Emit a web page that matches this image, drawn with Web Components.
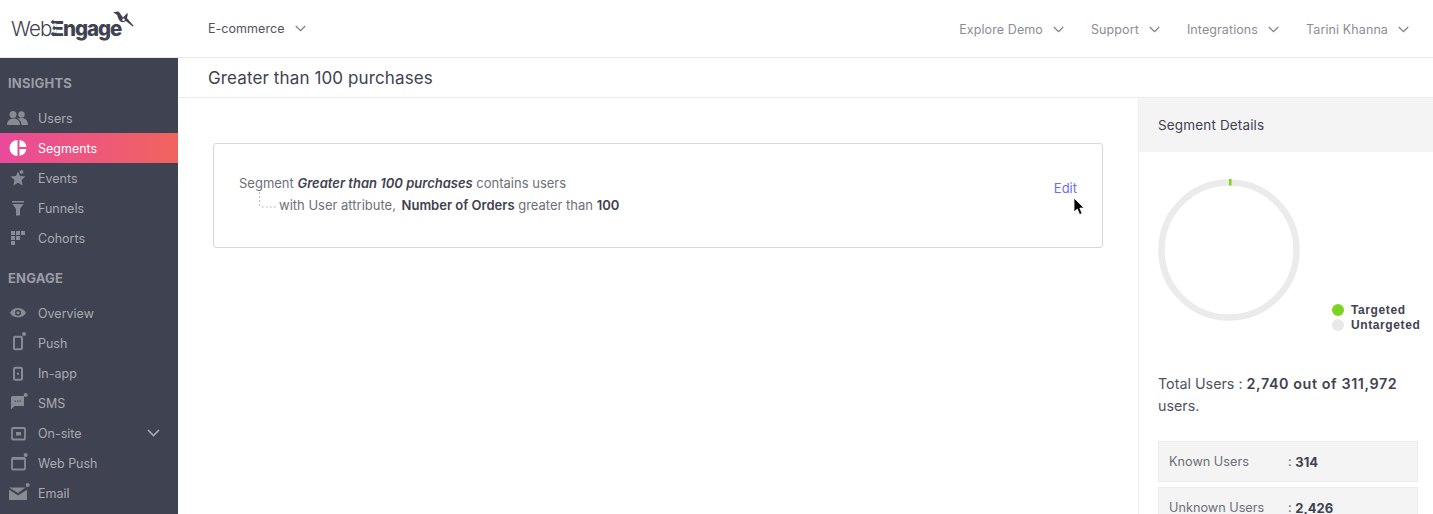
<!DOCTYPE html>
<html>
<head>
<meta charset="utf-8">
<title>Segments</title>
<style>
    html, body { margin: 0; height: 514px; overflow: hidden; background: #fff; }
    body { font-family: Inter, "Liberation Sans", sans-serif; color: #3f4250; }
</style>
</head>
<body>
<app-shell>
    <top-bar slot="top"></top-bar>
    <side-bar slot="side">
        <nav-group titulo="INSIGHTS">
            <nav-item icono="users">Users</nav-item>
            <nav-item icono="segments" activo>Segments</nav-item>
            <nav-item icono="events">Events</nav-item>
            <nav-item icono="funnels">Funnels</nav-item>
            <nav-item icono="cohorts">Cohorts</nav-item>
        </nav-group>
        <nav-group titulo="ENGAGE">
            <nav-item icono="overview">Overview</nav-item>
            <nav-item icono="push">Push</nav-item>
            <nav-item icono="inapp">In-app</nav-item>
            <nav-item icono="sms">SMS</nav-item>
            <nav-item icono="onsite" flecha>On-site</nav-item>
            <nav-item icono="webpush">Web Push</nav-item>
            <nav-item icono="email">Email</nav-item>
        </nav-group>
    </side-bar>
    <segment-card slot="main"></segment-card>
    <segment-details slot="details"></segment-details>
</app-shell>

<script>
const chevron = `<svg width="11" height="7" viewBox="0 0 11 7" fill="none" stroke="currentColor" stroke-width="1.3"><path d="M.8 1l4.700 4.600L10.200 1"/></svg>`;

// Los iconos usan las coordenadas de la fila: x desde el borde del menu, y desde arriba de la fila
const iconos = {
    users: `<circle cx="13" cy="11.500" r="3.500"/><circle cx="21.500" cy="11.500" r="3.200"/><path d="M7 22c0-4 2.600-6.500 6.500-6.500S20 18 20 22zM17.500 15.600c1-.4 2.500-.6 4-.6 3.600 0 6.500 2.500 6.500 7h-6.500c0-2.700-1.500-5-4-6.400z"/>`,
    segments: `<path d="M17.500 7a8 8 0 0 0 0 16zM19.500 7a8 8 0 0 1 7 7h-7zM19.500 16h6.800a8 8 0 0 1-6.800 6.800z"/>`,
    events: `<g transform="translate(1 -1)"><path d="M17 9.500l2 4.500 5.500.5-4 3.600 1.200 5.400-4.700-2.800-4.700 2.800 1.200-5.400-4-3.600 5.500-.5z"/><circle cx="20.500" cy="10" r="2.300" stroke="#3f4250" stroke-width=".8"/></g>`,
    funnels: `<path d="M12 8h12v1.500H12zM12.500 11h11L20 16v6.500h-4V16z"/>`,
    cohorts: `<path d="M11 8h4v4h-4zM16 8h4v4h-4zM21 8h4v4h-4zM11 13h4v4h-4zM16 13h4v4h-4zM11 18h4v4h-4z"/>`,
    overview: `<path fill-rule="evenodd" d="M18 10c3.500 0 6.500 2 8 4.800-1.500 2.800-4.500 4.700-8 4.700s-6.500-1.900-8-4.700c1.500-2.800 4.500-4.800 8-4.800zm0 1.800a3 3 0 1 0 0 6 3 3 0 0 0 0-6z"/><circle cx="18" cy="14.800" r="1.500"/>`,
    push: `<rect x="14" y="8.800" width="8" height="12.500" rx="1.200" fill="none" stroke="currentColor" stroke-width="2"/><circle cx="24" cy="6" r="2"/>`,
    inapp: `<rect x="14" y="9.800" width="8" height="12" rx="1.200" fill="none" stroke="currentColor" stroke-width="2"/><rect x="17" y="14.800" width="2" height="2"/>`,
    sms: `<path fill-rule="evenodd" d="M12.500 8h11.500v10H14.500L11 21.500V9.500c0-.9.600-1.500 1.500-1.500zM14.500 12.500v1.200h1.200v-1.200zm2.500 0v1.200h1.200v-1.200zm2.500 0v1.200h1.200v-1.200z"/><circle cx="25.700" cy="7" r="2"/>`,
    onsite: `<rect x="12" y="10" width="13" height="11.500" rx="1" fill="none" stroke="currentColor" stroke-width="1.800"/><rect x="16" y="14" width="5" height="3.500"/>`,
    webpush: `<rect x="12" y="10" width="13" height="11.500" rx="1" fill="none" stroke="currentColor" stroke-width="1.800"/><rect x="12" y="10" width="13" height="1.800"/><circle cx="25.700" cy="7" r="2"/>`,
    email: `<path d="M9 9.500h16.500L18 15zM9 11.500l9 6 9-5.800V22H9z"/><circle cx="27.700" cy="7" r="2"/>`
};

let plantillaShell = document.createElement('template');
plantillaShell.innerHTML = `
    <style>
        :host { display: grid; grid-template-columns: 178px 1fr; grid-template-rows: 58px 1fr; height: 514px; }
        .top { grid-column: 1 / 3; }
        .contenido { display: flex; flex-direction: column; min-width: 0; }
        h1 {
            margin: 0;
            height: 39px;
            line-height: 40px;
            padding-left: 30px;
            font-size: 17px;
            font-weight: 400;
            letter-spacing: .12px;
            color: #3f4250;
            border-bottom: 1px solid #ebebeb;
        }
        .cuerpo { display: grid; grid-template-columns: 1fr 295px; flex: 1; min-height: 0; }
        .principal { padding: 45px 35px 0; }
    </style>
    <div class="top"><slot name="top"></slot></div>
    <slot name="side"></slot>
    <div class="contenido">
        <h1>Greater than 100 purchases</h1>
        <div class="cuerpo">
            <div class="principal"><slot name="main"></slot></div>
            <slot name="details"></slot>
        </div>
    </div>
`;
class AppShell extends HTMLElement {
    constructor() {
        super();
        this.attachShadow({mode: 'open'});
        this.shadowRoot.appendChild(plantillaShell.content.cloneNode(true));
    }
}
customElements.define('app-shell', AppShell);

let plantillaTop = document.createElement('template');
plantillaTop.innerHTML = `
    <style>
        :host {
            display: flex;
            align-items: center;
            height: 57px;
            border-bottom: 1px solid #e8e8e8;
            font-size: 12.500px;
            color: #8b8d95;
            letter-spacing: .1px;
        }
        .logo {
            position: relative;
            width: 208px;
            height: 57px;
            flex: none;
            box-sizing: border-box;
            padding: 16px 0 0 11px;
            font-size: 20.500px;
            line-height: 26px;
            letter-spacing: -.8px;
            color: #3f4250;
        }
        .logo span { font-weight: 300; }
        .logo b { font-weight: 800; letter-spacing: -1.100px; }
        .logo svg { position: absolute; left: 111px; top: 10px; }
        .logo .cortes { left: 49px; top: 19px; }
        .menu { display: flex; align-items: center; gap: 10px; }
        .menu svg { color: #80828b; }
        .app { color: #50525e; letter-spacing: .05px; }
        .derecha { margin-left: auto; display: flex; gap: 27px; padding: 2px 24px 0 0; }
    </style>
    <div class="logo"><span>Web</span><b>Engage</b>
        <svg class="cortes" width="16" height="18" viewBox="0 0 16 18">
            <path d="M3 4.500h4.500v3.500H3zM3 10.200h4.500v3.500H3z" fill="#fff"/>
            <path d="M1.500 3l3-2.500v5zM7.500 9l-3-2.500v5zM1.500 15l3-2.500v5z" fill="#3f4250"/>
        </svg>
        <svg width="24" height="24" viewBox="0 0 24 24" fill="#3f4250">
            <path d="M2 2.200l3-.2c1.500-.9 3.200-.3 4 1.200l3 4.300 4.500-4.800c.3 2 .1 3.800-.6 5.300l6.600 7.700-.8.800-6.800-5.500c-1.300 1.200-3.200 1.500-5 .8C7.500 10.500 7 7.500 6.200 5 5 4.200 3.500 3.400 2 2.200z"/>
            <circle cx="12.500" cy="9.800" r="1.300" fill="#fff"/>
        </svg>
    </div>
    <div class="menu app"><span>E-commerce</span>${chevron}</div>
    <div class="derecha">
        <div class="menu"><span>Explore Demo</span>${chevron}</div>
        <div class="menu"><span>Support</span>${chevron}</div>
        <div class="menu"><span>Integrations</span>${chevron}</div>
        <div class="menu"><span>Tarini Khanna</span>${chevron}</div>
    </div>
`;
class TopBar extends HTMLElement {
    constructor() {
        super();
        this.attachShadow({mode: 'open'});
        this.shadowRoot.appendChild(plantillaTop.content.cloneNode(true));
    }
}
customElements.define('top-bar', TopBar);

let plantillaSide = document.createElement('template');
plantillaSide.innerHTML = `
    <style>
        :host { display: block; background: #3f4250; overflow: hidden; }
    </style>
    <slot></slot>
`;
class SideBar extends HTMLElement {
    constructor() {
        super();
        this.attachShadow({mode: 'open'});
        this.shadowRoot.appendChild(plantillaSide.content.cloneNode(true));
    }
}
customElements.define('side-bar', SideBar);

let plantillaGroup = document.createElement('template');
plantillaGroup.innerHTML = `
    <style>
        :host { display: block; }
        .titulo {
            height: 45px;
            line-height: 50px;
            padding-left: 8px;
            font-size: 13px;
            font-weight: 700;
            letter-spacing: .2px;
            color: #9b9da6;
        }
    </style>
    <div class="titulo"></div>
    <slot></slot>
`;
class NavGroup extends HTMLElement {
    constructor() {
        super();
        this.attachShadow({mode: 'open'});
        this.shadowRoot.appendChild(plantillaGroup.content.cloneNode(true));
        this.shadowRoot.querySelector(".titulo").textContent = this.getAttribute("titulo");
    }
}
customElements.define('nav-group', NavGroup);

let plantillaItem = document.createElement('template');
plantillaItem.innerHTML = `
    <style>
        :host {
            display: flex;
            align-items: center;
            height: 30px;
            font-size: 12.500px;
            color: #a9abb3;
        }
        :host([activo]) {
            background: linear-gradient(90deg, #ea4a9a, #f0645e);
            color: #fff;
        }
        .icono { flex: none; width: 32px; height: 30px; margin-right: 6px; color: #888a94; fill: currentColor; }
        :host([activo]) .icono { color: #fff; }
        .flecha { display: none; margin-left: auto; margin-right: 18px; color: #a9abb3; }
        :host([flecha]) .flecha { display: block; }
    </style>
    <svg class="icono" viewBox="0 0 32 30"></svg>
    <slot></slot>
    <svg class="flecha" width="13" height="8" viewBox="0 0 13 8" fill="none" stroke="currentColor" stroke-width="1.600"><path d="M1 1l5.500 5.500L12 1"/></svg>
`;
class NavItem extends HTMLElement {
    constructor() {
        super();
        this.attachShadow({mode: 'open'});
        this.shadowRoot.appendChild(plantillaItem.content.cloneNode(true));
        this.shadowRoot.querySelector(".icono").innerHTML = iconos[this.getAttribute("icono")];
    }
}
customElements.define('nav-item', NavItem);

let plantillaCard = document.createElement('template');
plantillaCard.innerHTML = `
    <style>
        :host {
            display: flex;
            justify-content: space-between;
            position: relative;
            box-sizing: border-box;
            height: 105px;
            padding: 28px 25px 0;
            border: 1px solid #d8d8d8;
            border-radius: 3px;
            font-size: 13px;
            line-height: 22px;
            color: #6d6f78;
        }
        b { color: #3f4250; font-weight: 600; }
        .campo { margin-left: 2px; }
        .regla { position: relative; padding-left: 40px; }
        .regla svg { position: absolute; left: 20px; top: -2px; }
        .edit { margin-top: 5px; color: #6a6ff0; }
        .cursor { position: absolute; left: 859px; top: 53px; }
    </style>
    <div>
        <div>Segment <b><i>Greater than 100 purchases</i></b> contains users</div>
        <div class="regla">
            <svg width="20" height="18" viewBox="0 0 20 18" fill="none" stroke="#b4bbc2" stroke-dasharray="2 2"><path d="M.5 0v12q0 3 3 3H18"/></svg>
            with User attribute, <b class="campo">Number of Orders</b> greater than <b>100</b>
        </div>
    </div>
    <div class="edit">Edit</div>
    <svg class="cursor" width="13" height="19" viewBox="0 0 13 19">
        <path d="M1 1v14l3.300-3 2.300 5.500 2.500-1-2.300-5.400H11z" fill="#000" stroke="#fff" stroke-width=".8"/>
    </svg>
`;
class SegmentCard extends HTMLElement {
    constructor() {
        super();
        this.attachShadow({mode: 'open'});
        this.shadowRoot.appendChild(plantillaCard.content.cloneNode(true));
    }
}
customElements.define('segment-card', SegmentCard);

let plantillaDetails = document.createElement('template');
plantillaDetails.innerHTML = `
    <style>
        :host {
            display: block;
            border-left: 1px solid #efefef;
            color: #3f4250;
            overflow: hidden;
        }
        .cabecera {
            height: 54px;
            line-height: 54px;
            padding-left: 19px;
            background: #f4f4f4;
            font-size: 13.500px;
            letter-spacing: .15px;
        }
        .cuerpo { padding: 27px 15px 0 19px; }
        .grafico { display: flex; }
        .grafico svg { flex: none; }
        .leyenda {
            align-self: flex-end;
            margin: 0 0 -12px 32px;
            font: bold 12px/15px "Liberation Sans", sans-serif;
            letter-spacing: .6px;
            white-space: nowrap;
        }
        .leyenda div { display: flex; align-items: center; gap: 7px; }
        .leyenda i { width: 12px; height: 12px; border-radius: 50%; position: relative; top: -1px; }
        .total { margin: 52px 0 24px; font-size: 14.300px; line-height: 22px; color: #50525e; }
        .total b { font-weight: 600; letter-spacing: .6px; color: #3f4250; }
        .fila {
            display: flex;
            align-items: center;
            height: 39px;
            margin-bottom: 5px;
            padding-left: 10px;
            background: #f4f4f4;
            border: 1px solid #ebebeb;
            font-size: 12.700px;
            color: #6d6f78;
        }
        .fila span { width: 119px; }
        .fila b { font-size: 13px; font-weight: 700; color: #3f4250; }
    </style>
    <div class="cabecera">Segment Details</div>
    <div class="cuerpo">
        <div class="grafico">
            <svg width="142" height="142" viewBox="0 0 142 142" fill="none">
                <circle cx="71" cy="71" r="67.500" stroke="#ebebeb" stroke-width="6.500"/>
                <rect x="71" y="0" width="2.500" height="6.500" fill="#7ed321"/>
            </svg>
            <div class="leyenda">
                <div><i style="background:#7ed321"></i>Targeted</div>
                <div><i style="background:#e8e8e8"></i>Untargeted</div>
            </div>
        </div>
        <div class="total">Total Users : <b>2,740 out of 311,972</b> users.</div>
        <div class="fila"><span>Known Users</span>:&nbsp;<b>314</b></div>
        <div class="fila"><span>Unknown Users</span>:&nbsp;<b>2,426</b></div>
    </div>
`;
class SegmentDetails extends HTMLElement {
    constructor() {
        super();
        this.attachShadow({mode: 'open'});
        this.shadowRoot.appendChild(plantillaDetails.content.cloneNode(true));
    }
}
customElements.define('segment-details', SegmentDetails);
</script>
</body>
</html>
